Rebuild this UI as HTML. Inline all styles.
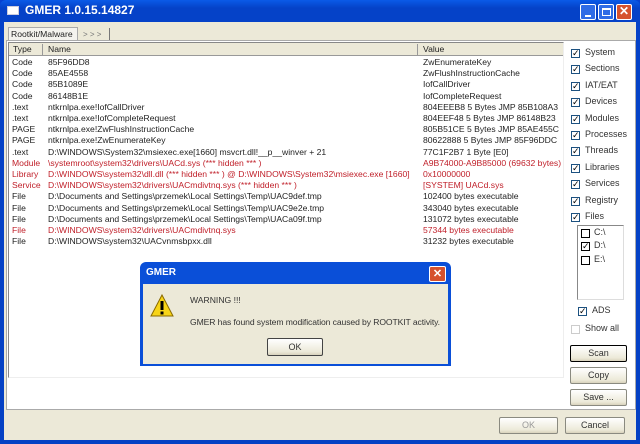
<!DOCTYPE html><html><head><style>
*{margin:0;padding:0;box-sizing:border-box}
body{width:640px;height:444px;overflow:hidden;background:#0841d0;font-family:"Liberation Sans",sans-serif;position:relative}
.a{position:absolute}
.win{left:0;top:0;width:640px;height:444px;background:linear-gradient(#0a5ae8,#0542c8 8px,#0541c4);border-radius:6px 6px 0 0}
.client{left:4px;top:22px;width:632px;height:418px;background:#ece9d8}
.t{font-size:8.6px;line-height:11.2px;white-space:nowrap;color:#222}
.r{color:#c0202a}
.btn{background:linear-gradient(#fff,#ece9d8 80%,#d8d2bd);border:1px solid #8a8a80;border-radius:2px;font-size:9px;text-align:center;color:#333}
.cb{width:9px;height:9px;border:1px solid #1c5180;background:#fff;font-size:9px;line-height:7px;text-align:center;color:#000}
.lbl{font-size:9px;color:#333}
</style></head><body>
<div class="a win"></div>
<div class="a" style="left:7px;top:6px;width:12px;height:9px;background:#fff;border:1px solid #ccd"></div>
<div class="a" style="left:25px;top:3px;color:#fff;font-weight:bold;font-size:12px">GMER 1.0.15.14827</div>
<div class="a" style="left:580px;top:4px;width:16px;height:16px;background:#2f6ce6;border:1px solid #fff;border-radius:2px"><div class="a" style="left:4px;top:10px;width:6px;height:2px;background:#fff"></div></div>
<div class="a" style="left:598px;top:4px;width:16px;height:16px;background:#2f6ce6;border:1px solid #fff;border-radius:2px"><div class="a" style="left:3px;top:3px;width:9px;height:8px;border:1px solid #fff;border-top-width:2px"></div></div>
<div class="a" style="left:616px;top:4px;width:16px;height:16px;background:#d6522e;border:1px solid #fff;border-radius:2px;color:#fff;font-size:12px;line-height:13px;text-align:center;font-weight:bold">✕</div>
<div class="a client"></div>
<div class="a" style="left:8px;top:27px;width:70px;height:13px;background:#f4f3ee;border:1px solid #aaa;border-bottom:none;font-size:8.6px;padding:1px 2px;color:#222">Rootkit/Malware</div>
<div class="a" style="left:79px;top:28px;width:31px;height:12px;border-right:1px solid #777;font-size:8px;padding:2px 4px;color:#777">&gt; &gt; &gt;</div>
<div class="a" style="left:6px;top:40px;width:630px;height:370px;background:#fff;border:1px solid #aaa"></div>
<div class="a" style="left:8px;top:42px;width:556px;height:336px;border:1px solid #888;border-right-color:#eee;border-bottom-color:#eee"></div>
<div class="a" style="left:9px;top:43px;width:554px;height:13px;background:#ece9d8;border-bottom:1px solid #999"></div>
<div class="a" style="left:42px;top:44px;width:1px;height:11px;background:#999"></div>
<div class="a" style="left:417px;top:44px;width:1px;height:11px;background:#999"></div>
<div class="a t" style="left:13px;top:44px">Type</div>
<div class="a t" style="left:48px;top:44px">Name</div>
<div class="a t" style="left:423px;top:44px">Value</div>
<div class="a t" style="left:12px;top:57px">Code<br>Code<br>Code<br>Code<br>.text<br>.text<br>PAGE<br>PAGE<br>.text<br><span class="r">Module<br>Library<br>Service</span><br>File<br>File<br>File<br><span class="r">File</span><br>File</div>
<div class="a t" style="left:48px;top:57px">85F96DD8<br>85AE4558<br>85B1089E<br>86148B1E<br>ntkrnlpa.exe!IofCallDriver<br>ntkrnlpa.exe!IofCompleteRequest<br>ntkrnlpa.exe!ZwFlushInstructionCache<br>ntkrnlpa.exe!ZwEnumerateKey<br>D:\WINDOWS\System32\msiexec.exe[1660] msvcrt.dll!__p__winver + 21<br><span class="r">\systemroot\system32\drivers\UACd.sys (*** hidden *** )<br>D:\WINDOWS\system32\dll.dll (*** hidden *** ) @ D:\WINDOWS\System32\msiexec.exe [1660]<br>D:\WINDOWS\system32\drivers\UACmdivtnq.sys (*** hidden *** )</span><br>D:\Documents and Settings\przemek\Local Settings\Temp\UAC9def.tmp<br>D:\Documents and Settings\przemek\Local Settings\Temp\UAC9e2e.tmp<br>D:\Documents and Settings\przemek\Local Settings\Temp\UACa09f.tmp<br><span class="r">D:\WINDOWS\system32\drivers\UACmdivtnq.sys</span><br>D:\WINDOWS\system32\UACvnmsbpxx.dll</div>
<div class="a t" style="left:423px;top:57px">ZwEnumerateKey<br>ZwFlushInstructionCache<br>IofCallDriver<br>IofCompleteRequest<br>804EEEB8 5 Bytes  JMP 85B108A3<br>804EEF48 5 Bytes  JMP 86148B23<br>805B51CE 5 Bytes  JMP 85AE455C<br>80622888 5 Bytes  JMP 85F96DDC<br>77C1F2B7 1 Byte  [E0]<br><span class="r">A9B74000-A9B85000 (69632 bytes)<br>0x10000000<br>[SYSTEM] UACd.sys</span><br>102400 bytes executable<br>343040 bytes executable<br>131072 bytes executable<br><span class="r">57344 bytes executable</span><br>31232 bytes executable</div>
<div class="a" style="left:571px;top:47px;width:65px">
 <div style="position:relative;height:16.4px"><div class="cb a" style="top:2px">✓</div><div class="lbl a" style="left:14px;top:0">System</div></div>
 <div style="position:relative;height:16.4px"><div class="cb a" style="top:2px">✓</div><div class="lbl a" style="left:14px;top:0">Sections</div></div>
 <div style="position:relative;height:16.4px"><div class="cb a" style="top:2px">✓</div><div class="lbl a" style="left:14px;top:0">IAT/EAT</div></div>
 <div style="position:relative;height:16.4px"><div class="cb a" style="top:2px">✓</div><div class="lbl a" style="left:14px;top:0">Devices</div></div>
 <div style="position:relative;height:16.4px"><div class="cb a" style="top:2px">✓</div><div class="lbl a" style="left:14px;top:0">Modules</div></div>
 <div style="position:relative;height:16.4px"><div class="cb a" style="top:2px">✓</div><div class="lbl a" style="left:14px;top:0">Processes</div></div>
 <div style="position:relative;height:16.4px"><div class="cb a" style="top:2px">✓</div><div class="lbl a" style="left:14px;top:0">Threads</div></div>
 <div style="position:relative;height:16.4px"><div class="cb a" style="top:2px">✓</div><div class="lbl a" style="left:14px;top:0">Libraries</div></div>
 <div style="position:relative;height:16.4px"><div class="cb a" style="top:2px">✓</div><div class="lbl a" style="left:14px;top:0">Services</div></div>
 <div style="position:relative;height:16.4px"><div class="cb a" style="top:2px">✓</div><div class="lbl a" style="left:14px;top:0">Registry</div></div>
 <div style="position:relative;height:16.4px"><div class="cb a" style="top:2px">✓</div><div class="lbl a" style="left:14px;top:0">Files</div></div>
</div>
<div class="a" style="left:577px;top:225px;width:47px;height:75px;border:1px solid #888;border-right-color:#ddd;border-bottom-color:#ddd;background:#fff"></div>
<div class="a cb" style="left:581px;top:229px;border-color:#000"></div><div class="a lbl" style="left:594px;top:227px">C:\</div>
<div class="a cb" style="left:581px;top:242px;border-color:#000">✓</div><div class="a lbl" style="left:594px;top:240px">D:\</div>
<div class="a cb" style="left:581px;top:256px;border-color:#000"></div><div class="a lbl" style="left:594px;top:254px">E:\</div>
<div class="a cb" style="left:578px;top:307px">✓</div><div class="a lbl" style="left:592px;top:305px">ADS</div>
<div class="a cb" style="left:571px;top:325px;border-color:#ccc"></div><div class="a lbl" style="left:585px;top:323px">Show all</div>
<div class="a btn" style="left:570px;top:345px;width:57px;height:17px;line-height:15px;border-color:#000">Scan</div>
<div class="a btn" style="left:570px;top:367px;width:57px;height:17px;line-height:15px">Copy</div>
<div class="a btn" style="left:570px;top:389px;width:57px;height:17px;line-height:15px">Save ...</div>
<div class="a btn" style="left:499px;top:417px;width:59px;height:17px;line-height:15px;color:#999">OK</div>
<div class="a btn" style="left:565px;top:417px;width:60px;height:17px;line-height:15px">Cancel</div>
<!-- dialog -->
<div class="a" style="left:140px;top:262px;width:311px;height:104px;background:#0a4fd8;border-radius:6px 6px 0 0"></div>
<div class="a" style="left:146px;top:267px;color:#fff;font-weight:bold;font-size:10px">GMER</div>
<div class="a" style="left:429px;top:266px;width:17px;height:16px;background:#d6522e;border:1px solid #fff;border-radius:2px;color:#fff;font-size:11px;line-height:14px;text-align:center;font-weight:bold">✕</div>
<div class="a" style="left:143px;top:284px;width:305px;height:80px;background:#ece9d8"></div>
<svg class="a" style="left:149px;top:293px" width="26" height="26" viewBox="0 0 26 26"><path d="M13 2 L24 23 L2 23 Z" fill="#f7d418" stroke="#8a6a00" stroke-width="1"/><rect x="11.5" y="8" width="3" height="9" fill="#000"/><rect x="11.5" y="18.5" width="3" height="3" fill="#000"/></svg>
<div class="a" style="left:190px;top:295px;font-size:8.6px;color:#333;white-space:nowrap">WARNING !!!</div>
<div class="a" style="left:190px;top:317px;font-size:8.6px;color:#333;white-space:nowrap;letter-spacing:-0.1px">GMER has found system modification caused by ROOTKIT activity.</div>
<div class="a btn" style="left:267px;top:338px;width:56px;height:18px;line-height:16px;border-color:#444">OK</div>
</body></html>
